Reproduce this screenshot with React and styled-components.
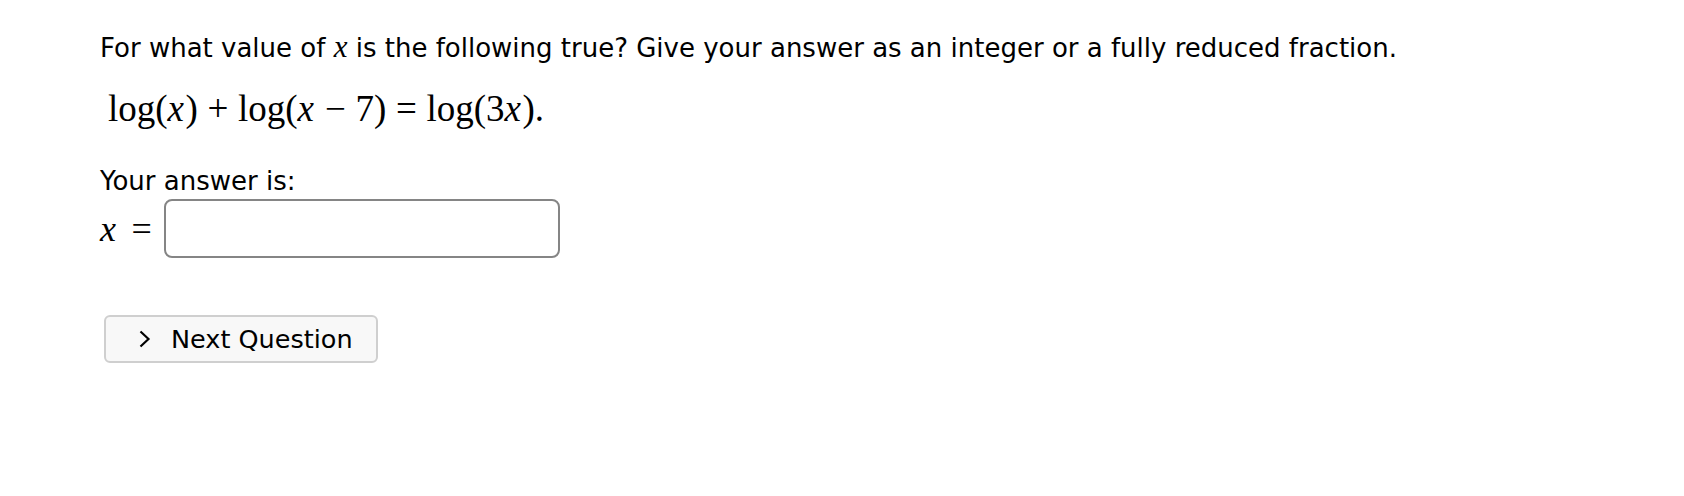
import React from "react";
import styled, { createGlobalStyle } from "styled-components";

const Global = createGlobalStyle`
  html, body { margin: 0; padding: 0; background: #fff; }
  body { font-family: "DejaVu Sans", "Verdana", sans-serif; color: #000; }
`;

const Page = styled.div`
  padding: 29px 0 0 100px;
  display: flex;
  flex-direction: column;
  align-items: flex-start;
`;

const Prompt = styled.p`
  margin: 0;
  font-size: 26px;
  line-height: 36px;
  white-space: nowrap;
`;

const MathLine = styled.div`
  margin: 21px 0 0 8px;
  font-family: "Liberation Serif", "DejaVu Serif", serif;
  font-size: 37px;
  line-height: 44px;
  white-space: nowrap;
`;

const MI = styled.i`
  font-family: "Liberation Serif", "DejaVu Serif", serif;
  font-style: italic;
  font-size: ${(p) => (p.$inline ? "31px" : "inherit")};
  padding-right: ${(p) => (p.$inline ? "0" : "0.04em")};
`;

const Op = styled.span`
  margin: 0 0.26em;
`;

const Label = styled.div`
  margin-top: 32px;
  font-size: 26px;
  line-height: 36px;
`;

const AnswerRow = styled.div`
  display: flex;
  align-items: center;
  gap: 12px;
  margin-top: 0;
`;

const Var = styled.span`
  font-family: "Liberation Serif", "DejaVu Serif", serif;
  font-size: 36px;
  white-space: nowrap;
  display: flex;
  align-items: center;
  gap: 14px;
`;

const Input = styled.input`
  box-sizing: border-box;
  width: 396px;
  height: 59px;
  border: 2px solid #858585;
  border-radius: 8px;
  background: #fff;
  font-size: 24px;
  padding: 0 10px;
  outline: none;
`;

const Button = styled.button`
  box-sizing: border-box;
  margin: 57px 0 0 4px;
  width: 274px;
  height: 48px;
  padding: 0 0 0 32px;
  display: flex;
  align-items: center;
  gap: 19px;
  background: #f8f8f8;
  border: 2px solid #cfcfcf;
  border-radius: 6px;
  font-family: "DejaVu Sans", "Verdana", sans-serif;
  font-size: 25.5px;
  color: #000;
  cursor: pointer;
`;

const Chevron = () => (
  <svg width="14" height="20" viewBox="0 0 14 20" fill="none">
    <path d="M2.5 2.5 L10.5 10 L2.5 17.5" stroke="#000" strokeWidth="2.2" />
  </svg>
);

export default function App() {
  return (
    <>
      <Global />
      <Page>
        <Prompt>
          For what value of <MI $inline>x</MI> is the following true? Give your answer as an integer or a fully reduced fraction.
        </Prompt>
        <MathLine>
          log(<MI>x</MI>)<Op>+</Op>log(<MI>x</MI><Op>−</Op>7)<Op>=</Op>log(3<MI>x</MI>).
        </MathLine>
        <Label>Your answer is:</Label>
        <AnswerRow>
          <Var>
            <MI>x</MI>
            <span>=</span>
          </Var>
          <Input aria-label="answer" />
        </AnswerRow>
        <Button>
          <Chevron />
          Next Question
        </Button>
      </Page>
    </>
  );
}
